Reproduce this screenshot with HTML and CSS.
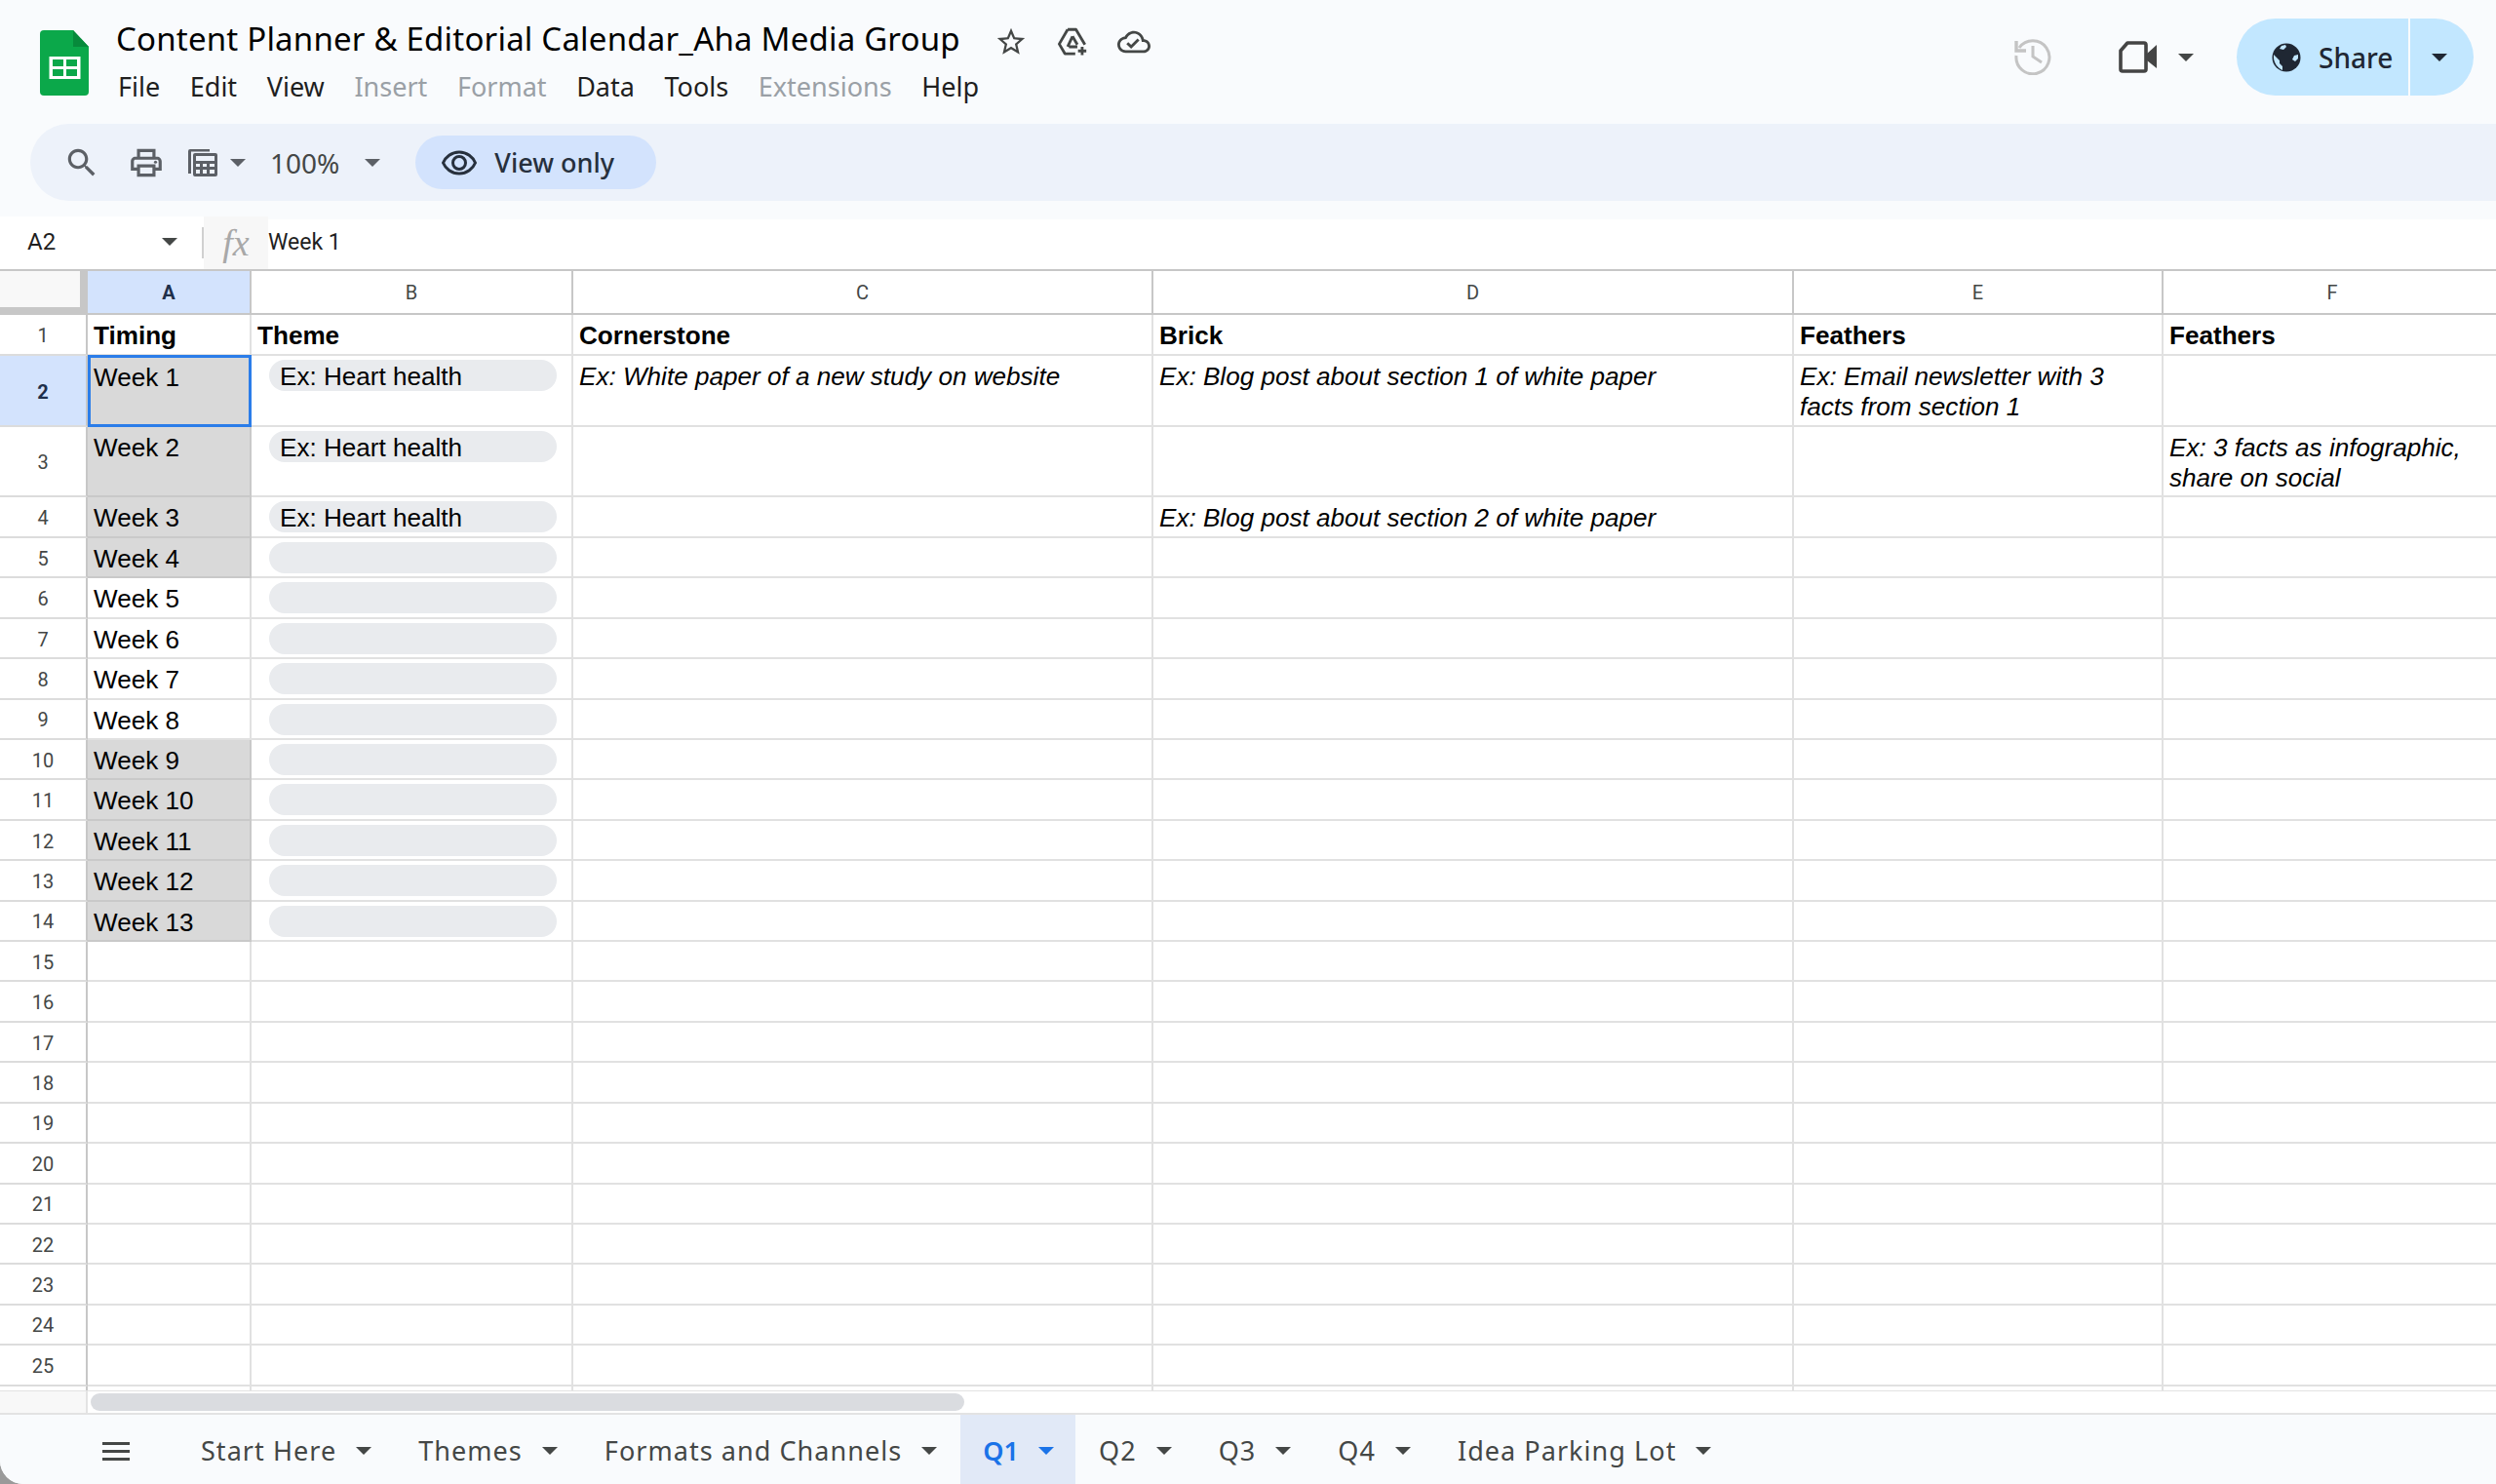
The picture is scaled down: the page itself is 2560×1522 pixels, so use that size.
FILE: index.html
```html
<!DOCTYPE html>
<html lang="en">
<head>
<meta charset="utf-8">
<title>Content Planner &amp; Editorial Calendar_Aha Media Group</title>
<link rel="stylesheet" href="styles.css">
</head>
<body>
<div class="app">
  <header class="top">
    <div class="appbar">
      <svg class="logo" viewBox="0 0 50 67"><path d="M4 0H34L50 17V63a4 4 0 0 1-4 4H4a4 4 0 0 1-4-4V4a4 4 0 0 1 4-4z" fill="#0ba84a"/><path d="M34 0L50 17H34z" fill="#078a3b"/><path fill="#fff" d="M9.500 27h32v23h-32z"/><path fill="#0ba84a" d="M13 30h11v7H13zM27 30h11v7H27zM13 40h11v7H13zM27 40h11v7H27z"/></svg>
      <div class="docinfo">
        <div class="titlerow">
          <span class="title">Content Planner &amp; Editorial Calendar_Aha Media Group</span>
          <span class="titleicons">
            <svg class="ti" viewBox="0 0 24 24"><path d="M22 9.24l-7.19-.62L12 2 9.19 8.63 2 9.24l5.46 4.73L5.82 21 12 17.27 18.18 21l-1.63-7.03L22 9.24zM12 15.4l-3.76 2.27 1-4.28-3.32-2.88 4.38-.38L12 6.1l1.71 4.04 4.38.38-3.32 2.88 1 4.28L12 15.4z"/></svg>
            <svg class="ti" viewBox="0 0 24 24"><path class="ln" d="M8.500 3h6l6.500 11M8.500 3L2.400 13.500 6.500 20.500H14M9.500 15.500h6M12 8l-3.500 7.500M12 8l3.500 6"/><path class="ln" d="M19 15.500v6M16 18.500h6"/></svg>
            <svg class="ti" viewBox="0 0 24 24"><path d="M19.35 10.04C18.67 6.59 15.64 4 12 4 9.11 4 6.6 5.64 5.35 8.04 2.34 8.36 0 10.91 0 14c0 3.31 2.69 6 6 6h13c2.76 0 5-2.24 5-5 0-2.64-2.05-4.78-4.65-4.96zM19 18H6c-2.21 0-4-1.79-4-4 0-2.05 1.53-3.76 3.56-3.97l1.07-.11.5-.95C8.08 7.14 9.94 6 12 6c2.62 0 4.88 1.86 5.39 4.43l.3 1.5 1.53.11c1.56.1 2.78 1.41 2.78 2.96 0 1.65-1.35 3-3 3zm-9-3.82l-2.09-2.09L6.5 13.5 10 17l6.01-6.01-1.41-1.41z"/></svg>
          </span>
        </div>
        <nav class="menu">
          <span>File</span><span>Edit</span><span>View</span><span class="dim">Insert</span><span class="dim">Format</span><span>Data</span><span>Tools</span><span class="dim">Extensions</span><span>Help</span>
        </nav>
      </div>
      <div class="actions">
        <svg class="history" viewBox="0 0 40 40"><path d="M6 12A17 17 0 1 1 3 20" fill="none" stroke="#c4c4c4" stroke-width="3"/><path d="M3 5V15H13" fill="none" stroke="#c4c4c4" stroke-width="3.400"/><path d="M20 10V21L29 27" fill="none" stroke="#c4c4c4" stroke-width="3"/></svg>
        <svg class="video" viewBox="0 0 40 33"><path d="M9 2H26a2 2 0 0 1 2 2V29a2 2 0 0 1-2 2H4a2 2 0 0 1-2-2V10z" fill="none" stroke="#444" stroke-width="3.600" stroke-linejoin="round"/><path d="M29 13L39 4V28L29 20z" fill="#444"/></svg>
        <span class="caret dark video-caret"></span>
        <div class="share">
          <div class="share-main">
            <svg class="globe" viewBox="0 0 30 30"><circle cx="15" cy="15" r="14.500" fill="#1f2733"/><path d="M2 12l6 6v3l3 3v4C6 26 2 20 2 15zM14 2l1 2-3 3-4-1 2-3z" fill="#c2e7ff"/><path d="M23 13l4-1v4l-3 3-3-2z" fill="#c2e7ff"/></svg>
            <span>Share</span>
          </div>
          <div class="share-more"><span class="caret navy"></span></div>
        </div>
      </div>
    </div>
    <div class="toolbar">
      <svg class="tool search" viewBox="0 0 24 24"><path d="M15.5 14h-.79l-.28-.27C15.41 12.59 16 11.11 16 9.5 16 5.91 13.09 3 9.5 3S3 5.91 3 9.5 5.91 16 9.5 16c1.61 0 3.09-.59 4.23-1.57l.27.28v.79l5 4.99L20.49 19l-4.99-5zm-6 0C7.01 14 5 11.99 5 9.5S7.01 5 9.5 5 14 7.01 14 9.5 11.99 14 9.5 14z"/></svg>
      <svg class="tool print" viewBox="0 0 24 24"><path d="M19 8h-1V3H6v5H5c-1.66 0-3 1.34-3 3v6h4v4h12v-4h4v-6c0-1.66-1.34-3-3-3zM8 5h8v3H8V5zm8 12v2H8v-4h8v2zm2-2v-2H6v2H4v-4c0-.55.45-1 1-1h14c.55 0 1 .45 1 1v4h-2z"/><circle cx="18" cy="11.500" r="1"/></svg>
      <svg class="tool calc" viewBox="0 0 32 32"><path d="M5 27H2V4a2 2 0 0 1 2-2H24V4.500H5z" fill="#5c6066"/><path d="M9 6H30a2 2 0 0 1 2 2V28a2 2 0 0 1-2 2H9a2 2 0 0 1-2-2V8a2 2 0 0 1 2-2zM10 9V14H29V9zM10 17V20H14V17zM17 17V20H21V17zM24 17V20H29V17zM10 23V27H14V23zM17 23V27H21V23zM24 23V27H29V23z" fill="#5c6066" fill-rule="evenodd"/></svg>
      <span class="caret calc-caret"></span>
      <span class="zoomval">100%</span>
      <span class="caret zoom-caret"></span>
      <div class="viewonly">
        <svg class="eye" viewBox="0 0 36 26"><path d="M18 2C10 2 4 7 1.500 13 4 19 10 24 18 24s14-5 16.500-11C32 7 26 2 18 2z" fill="none" stroke="#27303d" stroke-width="3"/><circle cx="18" cy="13" r="6.500" fill="none" stroke="#27303d" stroke-width="3"/></svg>
        <span>View only</span>
      </div>
    </div>
  </header>

  <div class="formula">
    <div class="namebox"><span>A2</span><span class="caret dark"></span></div>
    <div class="fsep"></div>
    <div class="fxbox"><span class="fx">fx</span></div>
    <div class="fval"><span>Week 1</span></div>
  </div>

  <main class="sheet">
    <div class="corner"></div><div class="ch on">A</div><div class="ch">B</div><div class="ch">C</div><div class="ch">D</div><div class="ch">E</div><div class="ch">F</div>

    <div class="rh">1</div><div class="c b">Timing</div><div class="c b">Theme</div><div class="c b">Cornerstone</div><div class="c b">Brick</div><div class="c b">Feathers</div><div class="c b">Feathers</div>

    <div class="rh on">2</div><div class="c g sel">Week 1</div><div class="c"><div class="chip">Ex: Heart health</div></div><div class="c i">Ex: White paper of a new study on website</div><div class="c i">Ex: Blog post about section 1 of white paper</div><div class="c i">Ex: Email newsletter with 3 facts from section 1</div><div class="c"></div>

    <div class="rh">3</div><div class="c g">Week 2</div><div class="c"><div class="chip">Ex: Heart health</div></div><div class="c"></div><div class="c"></div><div class="c"></div><div class="c i">Ex: 3 facts as infographic, share on social</div>

    <div class="rh">4</div><div class="c g">Week 3</div><div class="c"><div class="chip">Ex: Heart health</div></div><div class="c"></div><div class="c i">Ex: Blog post about section 2 of white paper</div><div class="c"></div><div class="c"></div>

    <div class="rh">5</div><div class="c g">Week 4</div><div class="c"><div class="chip"></div></div><div class="c"></div><div class="c"></div><div class="c"></div><div class="c"></div>
    <div class="rh">6</div><div class="c">Week 5</div><div class="c"><div class="chip"></div></div><div class="c"></div><div class="c"></div><div class="c"></div><div class="c"></div>
    <div class="rh">7</div><div class="c">Week 6</div><div class="c"><div class="chip"></div></div><div class="c"></div><div class="c"></div><div class="c"></div><div class="c"></div>
    <div class="rh">8</div><div class="c">Week 7</div><div class="c"><div class="chip"></div></div><div class="c"></div><div class="c"></div><div class="c"></div><div class="c"></div>
    <div class="rh">9</div><div class="c">Week 8</div><div class="c"><div class="chip"></div></div><div class="c"></div><div class="c"></div><div class="c"></div><div class="c"></div>
    <div class="rh">10</div><div class="c g">Week 9</div><div class="c"><div class="chip"></div></div><div class="c"></div><div class="c"></div><div class="c"></div><div class="c"></div>
    <div class="rh">11</div><div class="c g">Week 10</div><div class="c"><div class="chip"></div></div><div class="c"></div><div class="c"></div><div class="c"></div><div class="c"></div>
    <div class="rh">12</div><div class="c g">Week 11</div><div class="c"><div class="chip"></div></div><div class="c"></div><div class="c"></div><div class="c"></div><div class="c"></div>
    <div class="rh">13</div><div class="c g">Week 12</div><div class="c"><div class="chip"></div></div><div class="c"></div><div class="c"></div><div class="c"></div><div class="c"></div>
    <div class="rh">14</div><div class="c g">Week 13</div><div class="c"><div class="chip"></div></div><div class="c"></div><div class="c"></div><div class="c"></div><div class="c"></div>
    <div class="rh">15</div><div class="c"></div><div class="c"></div><div class="c"></div><div class="c"></div><div class="c"></div><div class="c"></div>
    <div class="rh">16</div><div class="c"></div><div class="c"></div><div class="c"></div><div class="c"></div><div class="c"></div><div class="c"></div>
    <div class="rh">17</div><div class="c"></div><div class="c"></div><div class="c"></div><div class="c"></div><div class="c"></div><div class="c"></div>
    <div class="rh">18</div><div class="c"></div><div class="c"></div><div class="c"></div><div class="c"></div><div class="c"></div><div class="c"></div>
    <div class="rh">19</div><div class="c"></div><div class="c"></div><div class="c"></div><div class="c"></div><div class="c"></div><div class="c"></div>
    <div class="rh">20</div><div class="c"></div><div class="c"></div><div class="c"></div><div class="c"></div><div class="c"></div><div class="c"></div>
    <div class="rh">21</div><div class="c"></div><div class="c"></div><div class="c"></div><div class="c"></div><div class="c"></div><div class="c"></div>
    <div class="rh">22</div><div class="c"></div><div class="c"></div><div class="c"></div><div class="c"></div><div class="c"></div><div class="c"></div>
    <div class="rh">23</div><div class="c"></div><div class="c"></div><div class="c"></div><div class="c"></div><div class="c"></div><div class="c"></div>
    <div class="rh">24</div><div class="c"></div><div class="c"></div><div class="c"></div><div class="c"></div><div class="c"></div><div class="c"></div>
    <div class="rh">25</div><div class="c"></div><div class="c"></div><div class="c"></div><div class="c"></div><div class="c"></div><div class="c"></div>
    <div class="rh"></div><div class="c"></div><div class="c"></div><div class="c"></div><div class="c"></div><div class="c"></div><div class="c"></div>
  </main>

  <div class="hscroll"><div class="hscroll-gutter"></div><div class="thumb"></div></div>

  <footer class="tabs">
    <div class="burger"><i></i><i></i><i></i></div>
    <div class="tab"><span>Start Here</span><span class="caret dark"></span></div>
    <div class="tab"><span>Themes</span><span class="caret dark"></span></div>
    <div class="tab"><span>Formats and Channels</span><span class="caret dark"></span></div>
    <div class="tab active"><span>Q1</span><span class="caret blue"></span></div>
    <div class="tab"><span>Q2</span><span class="caret dark"></span></div>
    <div class="tab"><span>Q3</span><span class="caret dark"></span></div>
    <div class="tab"><span>Q4</span><span class="caret dark"></span></div>
    <div class="tab"><span>Idea Parking Lot</span><span class="caret dark"></span></div>
  </footer>
</div>
</body>
</html>
```
FILE: styles.css
```css
* { box-sizing: border-box; }
html, body { margin: 0; height: 100%; }
body { background: #9a9a9a; overflow: hidden; font-family: "Liberation Sans", Arial, sans-serif; color: #000; }
.app { width: 2560px; height: 1522px; display: flex; flex-direction: column; background: #fff; border-radius: 0 0 0 24px; overflow: hidden; }

.caret { display: inline-block; width: 0; height: 0; border-left: 8px solid transparent; border-right: 8px solid transparent; border-top: 8px solid #5c6066; flex: none; }
.caret.dark { border-top-color: #444746; }
.caret.navy { border-top-color: #1f2733; }
.caret.blue { border-top-color: #1a73e8; }

.top { height: 222px; background: #f9fbfd; padding-top: 19px; flex: none; }
.appbar { display: flex; height: 79px; padding-left: 41px; }
.logo { width: 50px; height: 67px; margin-top: 12px; flex: none; }
.docinfo { margin-left: 28px; display: flex; flex-direction: column; }
.titlerow { display: flex; align-items: center; height: 42px; }
.title { font: 400 33px/42px "Noto Sans", sans-serif; letter-spacing: .2px; color: #000; white-space: nowrap; }
.titleicons { display: flex; margin-left: 35px; gap: 29px; margin-top: 6px; }
.ti { width: 34px; height: 34px; fill: #444746; }
.ln { fill: none; stroke: #444746; stroke-width: 2; stroke-linejoin: round; }
.menu { display: flex; gap: 30.6px; font: 400 27px/36px "Noto Sans", sans-serif; color: #1f1f1f; margin-top: 10px; margin-left: 2px; }
.menu .dim { color: #9aa0a6; }

.actions { margin-left: auto; margin-right: 23px; display: flex; align-items: center; }
.history { width: 40px; height: 40px; margin-right: 68px; margin-bottom: 3px; }
.video { width: 40px; height: 33px; }
.video-caret { margin-left: 21px; margin-right: 44px; }
.share { display: flex; width: 243px; height: 79px; }
.share-main { width: 177px; display: flex; align-items: center; background: #c2e7ff; border-radius: 40px 0 0 40px; padding-left: 36px; font: 500 28px "Noto Sans", sans-serif; color: #1f2733; gap: 18px; }
.globe { width: 30px; height: 30px; }
.share-more { width: 66px; margin-left: 2px; display: flex; align-items: center; justify-content: center; background: #c2e7ff; border-radius: 0 40px 40px 0; padding-right: 4px; }

.toolbar { display: flex; align-items: center; height: 79px; margin: 29px 0 0 31px; background: #edf2fa; border-radius: 40px 0 0 40px; }
.tool { fill: #5c6066; flex: none; }
.search { width: 38px; height: 38px; margin-left: 34px; }
.print { width: 38px; height: 38px; margin-left: 28px; }
.calc { width: 32px; height: 32px; margin-left: 22px; }
.calc-caret { margin-left: 13px; }
.zoomval { font: 400 28px "Noto Sans", sans-serif; color: #444746; margin-left: 25px; }
.zoom-caret { margin-left: 26px; }
.viewonly { display: flex; align-items: center; height: 55px; width: 247px; margin-left: 36px; background: #d3e3fd; border-radius: 28px; padding-left: 27px; gap: 18px; font: 500 27px "Noto Sans", sans-serif; color: #27303d; }
.eye { width: 36px; height: 26px; }

.formula { display: flex; height: 54px; flex: none; background: #fff; }
.namebox { width: 207px; display: flex; align-items: center; justify-content: space-between; padding: 0 25px 3px 28px; font: 400 24px Roboto, sans-serif; color: #1f1f1f; }
.fsep { width: 2px; height: 32px; margin-top: 11px; background: #d0d0d0; flex: none; }
.fxbox { width: 66px; background: #f7f7f7; display: flex; align-items: center; justify-content: center; flex: none; }
.fx { font: italic 400 38px/1 "Liberation Serif", serif; color: #a8a8a8; }
.fval { flex: 1; border-top: 3px solid #f9fbfd; display: flex; align-items: center; padding-bottom: 5px; font: 400 23px Roboto, sans-serif; color: #1f1f1f; }

.sheet { flex: none; height: 1150px; overflow: hidden; display: grid; grid-template-columns: 90px 168px 330px 595px 657px 379px 348px; grid-template-rows: 47px 42px 73px 72px 42px; grid-auto-rows: 41.42px; }
.corner { background: #f8f8f8; border-top: 2px solid #c7c7c7; border-right: 8px solid #c7c7c7; border-bottom: 8px solid #c7c7c7; }
.ch { border-top: 2px solid #c7c7c7; border-right: 2px solid #c7c7c7; border-bottom: 2px solid #c7c7c7; display: flex; align-items: center; justify-content: center; font: 400 20px Roboto, sans-serif; color: #444746; }
.ch.on { background: #d3e3fd; font-weight: 700; color: #1f2f4a; }
.rh { border-right: 2px solid #c7c7c7; border-bottom: 2px solid #dcdcdc; padding-top: 2px; display: flex; align-items: center; justify-content: center; font: 400 20px Roboto, sans-serif; color: #444746; }
.rh.on { background: #d3e3fd; font-weight: 700; color: #1f2f4a; }
.c { border-right: 2px solid #e1e1e1; border-bottom: 2px solid #e1e1e1; padding: 6px 6px 0 6px; font-size: 26.1px; line-height: 31px; }
.b { font-weight: 700; }
.i { font-style: italic; }
.g { background: #d9d9d9; border-color: #c9c9c9; }
.sel { margin-top: -1px; border: 3px solid #2b7de9; padding: 5px 3px 0 3px; }
.chip { height: 32px; margin: -2px 0 0 12px; width: 295px; padding-left: 11px; background: #e9ebee; border-radius: 16px; line-height: 34px; }

.hscroll { flex: none; height: 25px; display: flex; align-items: center; border-bottom: 2px solid #e3e3e3; border-top: 1px solid #e3e3e3; }
.hscroll-gutter { width: 90px; height: 100%; background: #f8f8f8; border-right: 2px solid #e3e3e3; }
.thumb { margin-left: 3px; width: 896px; height: 18px; border-radius: 9px; background: #dadce0; }

.tabs { flex: 1; display: flex; align-items: stretch; background: #f9fbfd; padding-left: 182px; position: relative; }
.burger { position: absolute; left: 105px; top: 28px; display: flex; flex-direction: column; gap: 5px; }
.burger i { display: block; width: 28px; height: 3px; background: #444746; }
.tab { display: flex; align-items: center; gap: 20px; padding: 2px 24px 0; font: 400 27px "Noto Sans", sans-serif; letter-spacing: 1.05px; color: #444746; }
.tab.active { background: #e1e9f7; color: #1a73e8; font-weight: 600; letter-spacing: 0; padding: 2px 22px 0 23px; }
```
